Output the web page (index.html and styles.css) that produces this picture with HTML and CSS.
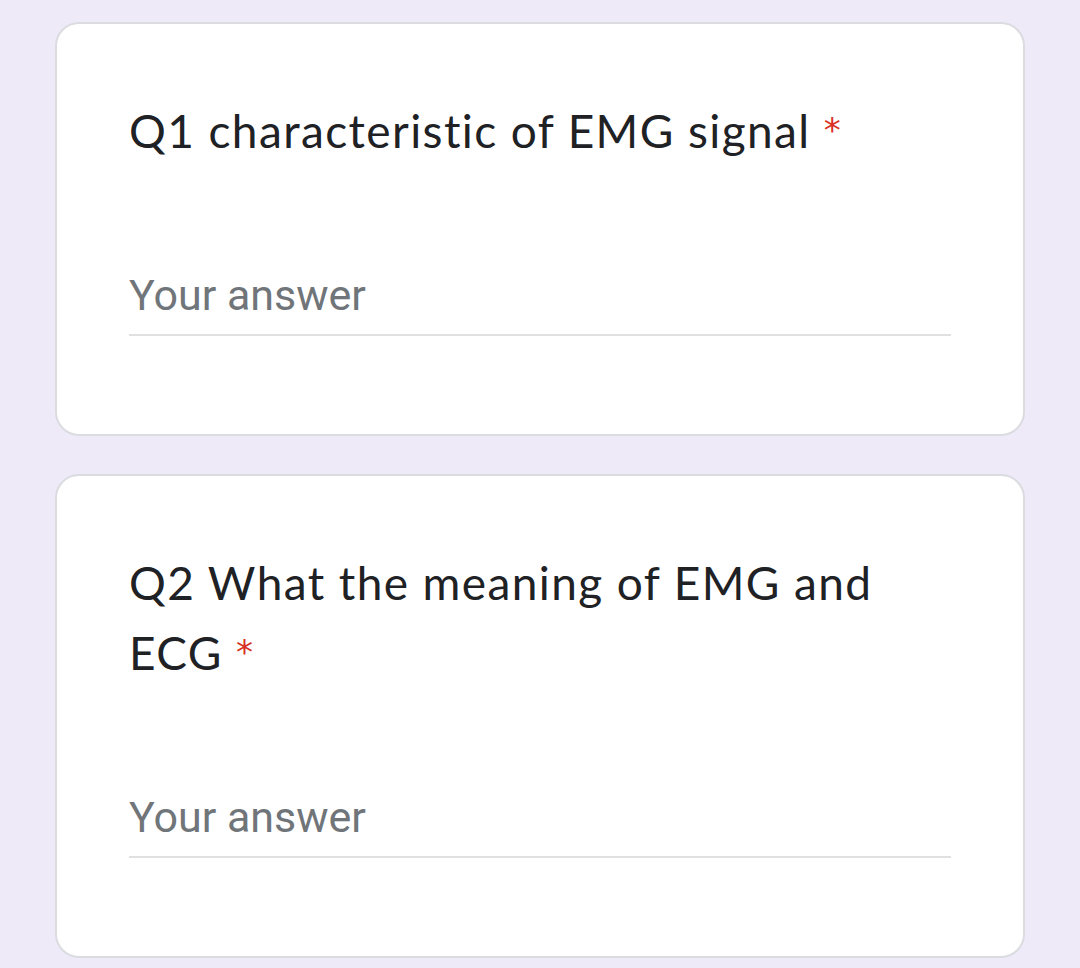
FILE: index.html
```html
<!DOCTYPE html>
<html lang="en">
<head>
    <meta charset="UTF-8">
    <meta name="viewport" content="width=device-width, initial-scale=1.0">
    <title>Form</title>
    <link rel="stylesheet" href="styles.css">
</head>
<body>
    <div class="form">
        <div class="card">
            <div class="question">Q1 characteristic of EMG signal <span class="required">*</span></div>
            <div class="answer">
                <input type="text" placeholder="Your answer">
            </div>
        </div>

        <div class="card">
            <div class="question">Q2 What the meaning of EMG and ECG <span class="required">*</span></div>
            <div class="answer">
                <input type="text" placeholder="Your answer">
            </div>
        </div>
    </div>
</body>
</html>
```

FILE: styles.css
```css
body {
    margin: 0;
    background-color: #eeeaf7;
    font-family: "Lato", sans-serif;
}
.form {
    display: flex;
    flex-direction: column;
    gap: 38px;
    padding: 22px 55px 0 55px;
}
.card {
    background-color: #fff;
    border: 2px solid #dadce0;
    border-radius: 24px;
    padding: 72px 72px 98px 72px;
}
.question {
    font-size: 46px;
    line-height: 70px;
    letter-spacing: 1.4px;
    font-variant-ligatures: none;
    color: #202124;
    width: 780px;
}
.required {
    color: #d93025;
    font-family: "DejaVu Sans", sans-serif;
    font-size: 34px;
    line-height: 0;
    vertical-align: 6px;
    letter-spacing: 0;
}
.answer {
    margin-top: 104px;
}
.answer input {
    width: 100%;
    box-sizing: border-box;
    border: none;
    border-bottom: 2px solid #e0e0e0;
    padding: 0 0 14px 0;
    font-family: Roboto, sans-serif;
    font-size: 43px;
    color: #202124;
    outline: none;
    background: transparent;
}
.answer input::placeholder {
    color: #70757a;
}
```
